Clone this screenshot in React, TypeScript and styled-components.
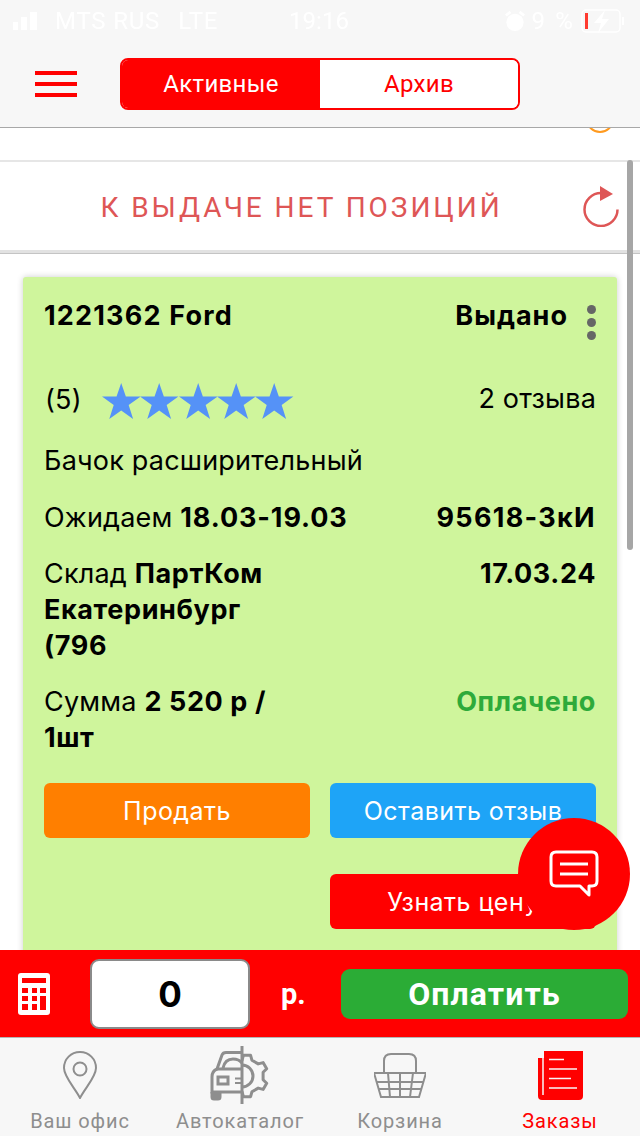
import React from 'react';
import styled, { createGlobalStyle } from 'styled-components';

const GlobalStyle = createGlobalStyle`
  html, body {
    margin: 0;
    padding: 0;
    background: #fff;
  }
  * {
    box-sizing: border-box;
  }
`;

const Page = styled.div`
  position: relative;
  width: 640px;
  height: 1136px;
  overflow: hidden;
  display: flex;
  flex-direction: column;
  font-family: Inter, 'Liberation Sans', sans-serif;
  color: #000;
  background: #fff;
`;

const Top = styled.header`
  flex: none;
  height: 128px;
  background: #f7f7f7;
  border-bottom: 1px solid #a8a8a8;
`;

const StatusBar = styled.div`
  height: 42px;
  padding: 0 15px 0 13px;
  display: grid;
  grid-template-columns: 1fr auto 1fr;
  align-items: center;
  color: #fff;
  font-family: Roboto, sans-serif;
  font-size: 24px;
  filter: blur(0.6px);
`;

const StatusLeft = styled.div`
  display: flex;
  align-items: center;
  gap: 18px;
  letter-spacing: 0.8px;
`;

const StatusRight = styled.div`
  display: flex;
  align-items: center;
  justify-content: flex-end;
  gap: 6px;
  letter-spacing: 2.2px;
`;

const Nav = styled.div`
  display: flex;
  align-items: flex-start;
  padding: 16px 0 0 35px;
`;

const Burger = styled.div`
  width: 42px;
  margin-top: 13px;
  display: flex;
  flex-direction: column;
  gap: 7.5px;
`;

const BurgerBar = styled.span`
  display: block;
  height: 3.5px;
  background: #f00;
`;

const Segments = styled.div`
  margin-left: 43px;
  width: 400px;
  height: 52px;
  display: flex;
  border: 2px solid #f00;
  border-radius: 8px;
  overflow: hidden;
  background: #fff;
`;

const Segment = styled.div<{ $active?: boolean; $width: number }>`
  width: ${(p) => p.$width}px;
  display: flex;
  align-items: center;
  justify-content: center;
  font-family: Roboto, sans-serif;
  font-size: 24px;
  letter-spacing: 0.3px;
  background: ${(p) => (p.$active ? '#f00' : '#fff')};
  color: ${(p) => (p.$active ? '#fff' : '#f00')};
`;

const Content = styled.main`
  position: relative;
  flex: 1;
  min-height: 0;
  overflow: hidden;
`;

const PreviousRow = styled.div`
  height: 32px;
  overflow: hidden;
  display: flex;
  justify-content: flex-end;
  padding-right: 26px;
`;

const OrangeRing = styled.div`
  width: 28px;
  height: 28px;
  margin-top: -23px;
  border: 2.5px solid #ff9a1f;
  border-radius: 50%;
`;

const EmptyBanner = styled.div`
  height: 93px;
  display: flex;
  align-items: center;
  border-top: 2px solid #e6e6e6;
  border-bottom: 3px solid #e2e2e2;
  box-shadow: 0 1px 0 #c4c4c4;
  padding: 0 21px 0 0;
`;

const EmptyTitle = styled.div`
  flex: 1;
  text-align: center;
  padding: 2px 0 0 20px;
  font-family: Roboto, sans-serif;
  font-size: 28px;
  letter-spacing: 2.95px;
  color: #de5656;
`;

const Scrollbar = styled.div`
  position: absolute;
  top: 32px;
  right: 7px;
  width: 6px;
  height: 390px;
  border-radius: 3px;
  background: #a6a6a6;
`;

const Card = styled.section`
  margin: 24px 23px 0;
  height: 700px;
  padding: 21px 21px 0;
  background: #cff59c;
  border-radius: 3px;
  box-shadow: 0 0 6px rgba(0, 0, 0, 0.2);
  font-size: 27px;
  line-height: 36px;
  letter-spacing: 0.2px;
`;

const Row = styled.div<{ $gap?: number }>`
  display: flex;
  justify-content: space-between;
  align-items: flex-start;
  margin-top: ${(p) => p.$gap ?? 0}px;
`;

const Left = styled.div`
  width: 250px;
`;

const Bold = styled.b<{ $tracking?: number }>`
  font-weight: 700;
  letter-spacing: ${(p) => p.$tracking ?? 0.6}px;
`;

const Paid = styled(Bold)`
  color: #2eaa3a;
`;

const TitleRight = styled.div`
  display: flex;
  align-items: flex-start;
  gap: 19px;
`;

const Kebab = styled.div`
  display: flex;
  flex-direction: column;
  gap: 4px;
  margin-top: 7px;
`;

const Dot = styled.span`
  width: 9px;
  height: 9px;
  border-radius: 50%;
  background: #666;
`;

const Rating = styled.div`
  display: flex;
  align-items: center;
  gap: 20px;
  padding-left: 1px;
`;

const Stars = styled.div`
  display: flex;
  margin-top: 2px;
`;

const Buttons = styled.div`
  display: grid;
  grid-template-columns: 266px 266px;
  column-gap: 20px;
  row-gap: 36px;
  margin-top: 27px;
`;

const ActionButton = styled.div<{ $color: string; $column?: number }>`
  grid-column: ${(p) => p.$column ?? 'auto'};
  height: 55px;
  display: flex;
  align-items: center;
  justify-content: center;
  border-radius: 6px;
  background: ${(p) => p.$color};
  color: #fff;
  font-size: 25px;
  letter-spacing: 0.45px;
`;

const ChatButton = styled.div`
  position: absolute;
  left: 518px;
  top: 690px;
  width: 112px;
  height: 112px;
  border-radius: 50%;
  background: #f00;
  display: flex;
  align-items: center;
  justify-content: center;
`;

const PayBar = styled.div`
  flex: none;
  position: relative;
  height: 87px;
  background: #f00;
  display: flex;
  align-items: center;
  padding: 0 12px 0 18px;
`;

const AmountInput = styled.div`
  margin-left: 40px;
  width: 160px;
  height: 70px;
  border: 2px solid #8a8a8a;
  border-radius: 9px;
  background: #fff;
  display: flex;
  align-items: center;
  justify-content: center;
  font-size: 35px;
  font-weight: 700;
`;

const Currency = styled.div`
  margin-left: 31px;
  width: 60px;
  color: #fff;
  font-family: Roboto, sans-serif;
  font-size: 29px;
  font-weight: 700;
`;

const PayButton = styled.div`
  flex: 1;
  height: 50px;
  border-radius: 9px;
  background: #2bac36;
  color: #fff;
  display: flex;
  align-items: center;
  justify-content: center;
  font-family: Roboto, sans-serif;
  font-size: 32px;
  font-weight: 700;
  letter-spacing: 1.1px;
`;

const TabBar = styled.nav`
  flex: none;
  height: 99px;
  background: #f7f7f7;
  border-top: 1px solid #b5b5b5;
  display: grid;
  grid-template-columns: repeat(4, 1fr);
`;

const TabItem = styled.div<{ $active?: boolean }>`
  display: flex;
  flex-direction: column;
  align-items: center;
  justify-content: flex-end;
  padding-bottom: 2px;
  font-family: Roboto, sans-serif;
  font-size: 20px;
  line-height: 26px;
  letter-spacing: 0.9px;
  color: ${(p) => (p.$active ? '#f00' : '#8e8e8e')};
`;

const TabIcon = styled.div`
  height: 66px;
  display: flex;
  align-items: center;
  justify-content: center;
`;

function Star() {
  return (
    <svg width="38.4" height="36" viewBox="0 0 38 36" preserveAspectRatio="none">
      <path d="M19 0l4.6 13.6H38L26.4 22l4.4 14L19 27.4 7.2 36l4.4-14L0 13.6h14.4z" fill="#5592f7" />
    </svg>
  );
}

function Signal() {
  return (
    <svg width="24" height="18" viewBox="0 0 24 18">
      <rect x="0" y="10" width="5" height="8" fill="#fff" />
      <rect x="8" y="5" width="6" height="13" fill="#fff" />
      <rect x="17" y="0" width="7" height="18" fill="#fff" />
    </svg>
  );
}

function Alarm() {
  return (
    <svg width="20" height="24" viewBox="0 0 22 24">
      <circle cx="11" cy="13.5" r="9.500" fill="#fff" />
      <path d="M1 6l5-4M21 6l-5-4" stroke="#fff" strokeWidth="3" />
    </svg>
  );
}

function Battery() {
  return (
    <svg width="44" height="24" viewBox="0 0 44 24">
      <rect x="1" y="1" width="38" height="22" rx="4" fill="none" stroke="#fff" strokeWidth="1.500" />
      <rect x="41" y="8" width="2" height="8" fill="#fff" />
      <rect x="4" y="4" width="3" height="16" fill="#ff3b30" />
      <path d="M24 1L13 14h7l-3 10 11-14h-7z" fill="#fff" />
    </svg>
  );
}

function Refresh() {
  return (
    <svg width="36" height="41" viewBox="0 0 36 41">
      <path d="M18 7A16.500 16.500 0 1 0 34.500 23.500" fill="none" stroke="#de5656" strokeWidth="2.500" />
      <path d="M17 0L30 8L17 15Z" fill="#de5656" />
    </svg>
  );
}

function ChatIcon() {
  return (
    <svg width="50" height="48" viewBox="0 0 50 48">
      <path
        d="M7 2H43Q48 2 48 7V31Q48 36 43 36H40V45L31 36H7Q2 36 2 31V7Q2 2 7 2Z"
        fill="none"
        stroke="#fff"
        strokeWidth="3"
        strokeLinejoin="round"
      />
      <path d="M11 14H39M11 24H39" stroke="#fff" strokeWidth="3" />
    </svg>
  );
}

function Calculator() {
  return (
    <svg width="32" height="42" viewBox="0 0 32 42">
      <rect width="32" height="42" rx="3" fill="#fff" />
      <g fill="#f00">
        <rect x="4" y="5" width="24" height="5" />
        <rect x="4" y="15" width="6" height="5" />
        <rect x="14" y="15" width="5" height="5" />
        <rect x="22" y="15" width="6" height="5" />
        <rect x="4" y="23" width="6" height="5" />
        <rect x="14" y="23" width="5" height="5" />
        <rect x="22" y="23" width="6" height="14" />
        <rect x="4" y="31" width="6" height="6" />
        <rect x="14" y="31" width="5" height="6" />
      </g>
    </svg>
  );
}

function PinIcon() {
  return (
    <svg width="34" height="48" viewBox="0 0 34 48" fill="none" stroke="#8e8e8e" strokeWidth="2">
      <path d="M17 1C8 1 1 8 1 17C1 26 12 37 17 47C22 37 33 26 33 17C33 8 26 1 17 1Z" />
      <circle cx="17" cy="18" r="6.500" />
    </svg>
  );
}

// six-toothed cog outline around cx, cy
function gearPath(cx: number, cy: number, inner: number, outer: number) {
  const pts: string[] = [];
  const step = Math.PI / 3;
  for (let i = 0; i < 6; i++) {
    const a = -Math.PI / 2 + i * step;
    const at = (r: number, t: number) =>
      `${(cx + r * Math.cos(a + t)).toFixed(1)} ${(cy + r * Math.sin(a + t)).toFixed(1)}`;
    pts.push(at(inner, -0.3), at(outer, -0.17), at(outer, 0.17), at(inner, 0.3));
  }
  return `M${pts.join('L')}Z`;
}

function CarIcon() {
  return (
    <svg width="60" height="58" viewBox="0 0 60 58" fill="none" stroke="#8e8e8e" strokeWidth="3">
      <clipPath id="gear-half">
        <rect x="32" y="0" width="28" height="58" />
      </clipPath>
      <path d="M32 0V58" />
      <path d="M32 6.500H16Q13 6.500 12 9L7 23Q2 25 2 31V46H32" />
      <path d="M2 46V51Q2 53 4 53H8Q10 53 10 51V46" fill="#8e8e8e" />
      <path d="M13 22Q15 13 23 13Q29 13 32 17M7 23H32" />
      <rect x="8" y="31" width="10" height="7" />
      <path d="M25 32.500H31M25 37H31" strokeWidth="2" />
      <path d={gearPath(37, 30, 16.500, 21)} strokeLinejoin="round" clipPath="url(#gear-half)" />
      <path d="M32 19A11 11 0 0 1 32 41" />
    </svg>
  );
}

function BasketIcon() {
  return (
    <svg width="52" height="45" viewBox="0 0 52 45" fill="none" stroke="#8e8e8e" strokeWidth="2">
      <path d="M10 19V8Q10 1 17 1H35Q42 1 42 8V19" />
      <path d="M0 20H52L45 44H7Z" />
      <path d="M3 29H49M5 36H47M14 20L16 44M26 20V44M39 20L36 44" />
    </svg>
  );
}

function OrdersIcon() {
  return (
    <svg width="45" height="49" viewBox="0 0 45 49">
      <path d="M6 0H45V45Q45 49 41 49H4Q0 49 0 45V7H6Z" fill="#f00" />
      <path d="M5 6V44" stroke="#f7f7f7" strokeWidth="1.500" />
      <path d="M11 8.500H26M11 18H39M11 27.500H33M11 37H39" stroke="#f7f7f7" strokeWidth="1.500" />
    </svg>
  );
}

export default function App() {
  return (
    <Page>
      <GlobalStyle />
      <Top>
        <StatusBar>
          <StatusLeft>
            <Signal />
            <span>MTS RUS</span>
            <span>LTE</span>
          </StatusLeft>
          <span>19:16</span>
          <StatusRight>
            <Alarm />
            <span>9 %</span>
            <Battery />
          </StatusRight>
        </StatusBar>
        <Nav>
          <Burger>
            <BurgerBar />
            <BurgerBar />
            <BurgerBar />
          </Burger>
          <Segments>
            <Segment $active $width={198}>
              Активные
            </Segment>
            <Segment $width={198}>Архив</Segment>
          </Segments>
        </Nav>
      </Top>
      <Content>
        <PreviousRow>
          <OrangeRing />
        </PreviousRow>
        <EmptyBanner>
          <EmptyTitle>К ВЫДАЧЕ НЕТ ПОЗИЦИЙ</EmptyTitle>
          <Refresh />
        </EmptyBanner>
        <Card>
          <Row>
            <Bold $tracking={1.2}>1221362 Ford</Bold>
            <TitleRight>
              <Bold $tracking={1}>Выдано</Bold>
              <Kebab>
                <Dot />
                <Dot />
                <Dot />
              </Kebab>
            </TitleRight>
          </Row>
          <Row $gap={41}>
            <Rating>
              <span>(5)</span>
              <Stars>
                <Star />
                <Star />
                <Star />
                <Star />
                <Star />
              </Stars>
            </Rating>
            <span>2 отзыва</span>
          </Row>
          <Row $gap={24}>
            <span>Бачок расширительный</span>
          </Row>
          <Row $gap={21}>
            <span>
              Ожидаем <Bold $tracking={0.9}>18.03-19.03</Bold>
            </span>
            <Bold $tracking={1.3}>95618-3кИ</Bold>
          </Row>
          <Row $gap={20}>
            <Left>
              Склад <Bold>ПартКом Екатеринбург (796</Bold>
            </Left>
            <Bold>17.03.24</Bold>
          </Row>
          <Row $gap={20}>
            <Left>
              Сумма <Bold>2 520 р / 1шт</Bold>
            </Left>
            <Paid>Оплачено</Paid>
          </Row>
          <Buttons>
            <ActionButton $color="#ff7f00">Продать</ActionButton>
            <ActionButton $color="#1ea4f7">Оставить отзыв</ActionButton>
            <ActionButton $color="#f00" $column={2}>
              Узнать цену
            </ActionButton>
          </Buttons>
        </Card>
        <Scrollbar />
        <ChatButton>
          <ChatIcon />
        </ChatButton>
      </Content>
      <PayBar>
        <Calculator />
        <AmountInput>0</AmountInput>
        <Currency>р.</Currency>
        <PayButton>Оплатить</PayButton>
      </PayBar>
      <TabBar>
        <TabItem>
          <TabIcon>
            <PinIcon />
          </TabIcon>
          Ваш офис
        </TabItem>
        <TabItem>
          <TabIcon>
            <CarIcon />
          </TabIcon>
          Автокаталог
        </TabItem>
        <TabItem>
          <TabIcon>
            <BasketIcon />
          </TabIcon>
          Корзина
        </TabItem>
        <TabItem $active>
          <TabIcon>
            <OrdersIcon />
          </TabIcon>
          Заказы
        </TabItem>
      </TabBar>
    </Page>
  );
}
